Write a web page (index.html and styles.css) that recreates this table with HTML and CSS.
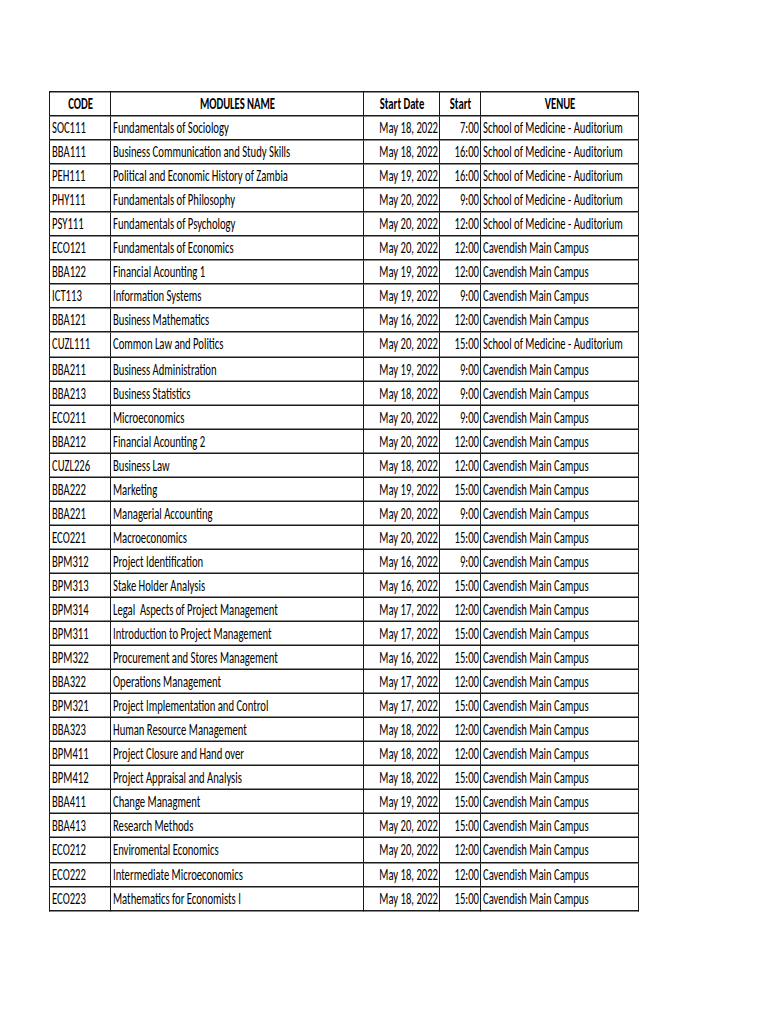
FILE: index.html
```html
<!DOCTYPE html>
<html>
<head>
<meta charset="utf-8">
<link rel="stylesheet" href="styles.css">
</head>
<body>
<div class="sheet">
<table class="sched">
<colgroup><col class="c-code"><col class="c-name"><col class="c-date"><col class="c-start"><col class="c-venue"></colgroup>
<thead>
<tr><th>CODE</th><th>MODULES NAME</th><th>Start Date</th><th>Start</th><th>VENUE</th></tr>
</thead>
<tbody>
<tr><td>SOC111</td><td>Fundamentals of Sociology</td><td class="r">May 18, 2022</td><td class="r">7:00</td><td>School of Medicine - Auditorium</td></tr>
<tr><td>BBA111</td><td>Business Communication and Study Skills</td><td class="r">May 18, 2022</td><td class="r">16:00</td><td>School of Medicine - Auditorium</td></tr>
<tr><td>PEH111</td><td>Political and Economic History of Zambia</td><td class="r">May 19, 2022</td><td class="r">16:00</td><td>School of Medicine - Auditorium</td></tr>
<tr><td>PHY111</td><td>Fundamentals of Philosophy</td><td class="r">May 20, 2022</td><td class="r">9:00</td><td>School of Medicine - Auditorium</td></tr>
<tr><td>PSY111</td><td>Fundamentals of Psychology</td><td class="r">May 20, 2022</td><td class="r">12:00</td><td>School of Medicine - Auditorium</td></tr>
<tr><td>ECO121</td><td>Fundamentals of Economics</td><td class="r">May 20, 2022</td><td class="r">12:00</td><td>Cavendish Main Campus</td></tr>
<tr><td>BBA122</td><td>Financial Acounting 1</td><td class="r">May 19, 2022</td><td class="r">12:00</td><td>Cavendish Main Campus</td></tr>
<tr><td>ICT113</td><td>Information Systems</td><td class="r">May 19, 2022</td><td class="r">9:00</td><td>Cavendish Main Campus</td></tr>
<tr><td>BBA121</td><td>Business Mathematics</td><td class="r">May 16, 2022</td><td class="r">12:00</td><td>Cavendish Main Campus</td></tr>
<tr><td>CUZL111</td><td>Common Law and Politics</td><td class="r">May 20, 2022</td><td class="r">15:00</td><td>School of Medicine - Auditorium</td></tr>
<tr><td>BBA211</td><td>Business Administration</td><td class="r">May 19, 2022</td><td class="r">9:00</td><td>Cavendish Main Campus</td></tr>
<tr><td>BBA213</td><td>Business Statistics</td><td class="r">May 18, 2022</td><td class="r">9:00</td><td>Cavendish Main Campus</td></tr>
<tr><td>ECO211</td><td>Microeconomics</td><td class="r">May 20, 2022</td><td class="r">9:00</td><td>Cavendish Main Campus</td></tr>
<tr><td>BBA212</td><td>Financial Acounting 2</td><td class="r">May 20, 2022</td><td class="r">12:00</td><td>Cavendish Main Campus</td></tr>
<tr><td>CUZL226</td><td>Business Law</td><td class="r">May 18, 2022</td><td class="r">12:00</td><td>Cavendish Main Campus</td></tr>
<tr><td>BBA222</td><td>Marketing</td><td class="r">May 19, 2022</td><td class="r">15:00</td><td>Cavendish Main Campus</td></tr>
<tr><td>BBA221</td><td>Managerial Accounting</td><td class="r">May 20, 2022</td><td class="r">9:00</td><td>Cavendish Main Campus</td></tr>
<tr><td>ECO221</td><td>Macroeconomics</td><td class="r">May 20, 2022</td><td class="r">15:00</td><td>Cavendish Main Campus</td></tr>
<tr><td>BPM312</td><td>Project Identification</td><td class="r">May 16, 2022</td><td class="r">9:00</td><td>Cavendish Main Campus</td></tr>
<tr><td>BPM313</td><td>Stake Holder Analysis</td><td class="r">May 16, 2022</td><td class="r">15:00</td><td>Cavendish Main Campus</td></tr>
<tr><td>BPM314</td><td>Legal&nbsp; Aspects of Project Management</td><td class="r">May 17, 2022</td><td class="r">12:00</td><td>Cavendish Main Campus</td></tr>
<tr><td>BPM311</td><td>Introduction to Project Management</td><td class="r">May 17, 2022</td><td class="r">15:00</td><td>Cavendish Main Campus</td></tr>
<tr><td>BPM322</td><td>Procurement and Stores Management</td><td class="r">May 16, 2022</td><td class="r">15:00</td><td>Cavendish Main Campus</td></tr>
<tr><td>BBA322</td><td>Operations Management</td><td class="r">May 17, 2022</td><td class="r">12:00</td><td>Cavendish Main Campus</td></tr>
<tr><td>BPM321</td><td>Project Implementation and Control</td><td class="r">May 17, 2022</td><td class="r">15:00</td><td>Cavendish Main Campus</td></tr>
<tr><td>BBA323</td><td>Human Resource Management</td><td class="r">May 18, 2022</td><td class="r">12:00</td><td>Cavendish Main Campus</td></tr>
<tr><td>BPM411</td><td>Project Closure and Hand over</td><td class="r">May 18, 2022</td><td class="r">12:00</td><td>Cavendish Main Campus</td></tr>
<tr><td>BPM412</td><td>Project Appraisal and Analysis</td><td class="r">May 18, 2022</td><td class="r">15:00</td><td>Cavendish Main Campus</td></tr>
<tr><td>BBA411</td><td>Change Managment</td><td class="r">May 19, 2022</td><td class="r">15:00</td><td>Cavendish Main Campus</td></tr>
<tr><td>BBA413</td><td>Research Methods</td><td class="r">May 20, 2022</td><td class="r">15:00</td><td>Cavendish Main Campus</td></tr>
<tr><td>ECO212</td><td>Enviromental Economics</td><td class="r">May 20, 2022</td><td class="r">12:00</td><td>Cavendish Main Campus</td></tr>
<tr><td>ECO222</td><td>Intermediate Microeconomics</td><td class="r">May 18, 2022</td><td class="r">12:00</td><td>Cavendish Main Campus</td></tr>
<tr><td>ECO223</td><td>Mathematics for Economists I</td><td class="r">May 18, 2022</td><td class="r">15:00</td><td>Cavendish Main Campus</td></tr>
</tbody>
</table>
</div>
</body>
</html>
```

FILE: styles.css
```css
html, body {
  margin: 0;
  padding: 0;
  background: #ffffff;
}
html {
  min-height: 1024px;
}
body {
  box-sizing: border-box;
  min-height: 1024px;
  padding: 91px 0 0 49px;
}
.sheet {
  width: 589px;
  height: 546px;
  transform: scaleY(1.5);
  transform-origin: 0 0;
}
.sched {
  border-collapse: collapse;
  table-layout: fixed;
  width: 589px;
  font-family: Carlito, "Liberation Sans", sans-serif;
  font-size: 10.65px;
  color: #000;
}
.c-code { width: 61px; }
.c-name { width: 253px; }
.c-date { width: 76px; }
.c-start { width: 41px; }
.c-venue { width: 158px; }
.sched th, .sched td {
  border: 1px solid #1a1a1a;
  height: 15.06px;
  padding: 0 1px 0 2px;
  white-space: nowrap;
  overflow: hidden;
  text-align: left;
  vertical-align: middle;
  line-height: 13px;
}
.sched th {
  text-align: center;
  font-weight: bold;
}
.sched td.r {
  text-align: right;
}
```
